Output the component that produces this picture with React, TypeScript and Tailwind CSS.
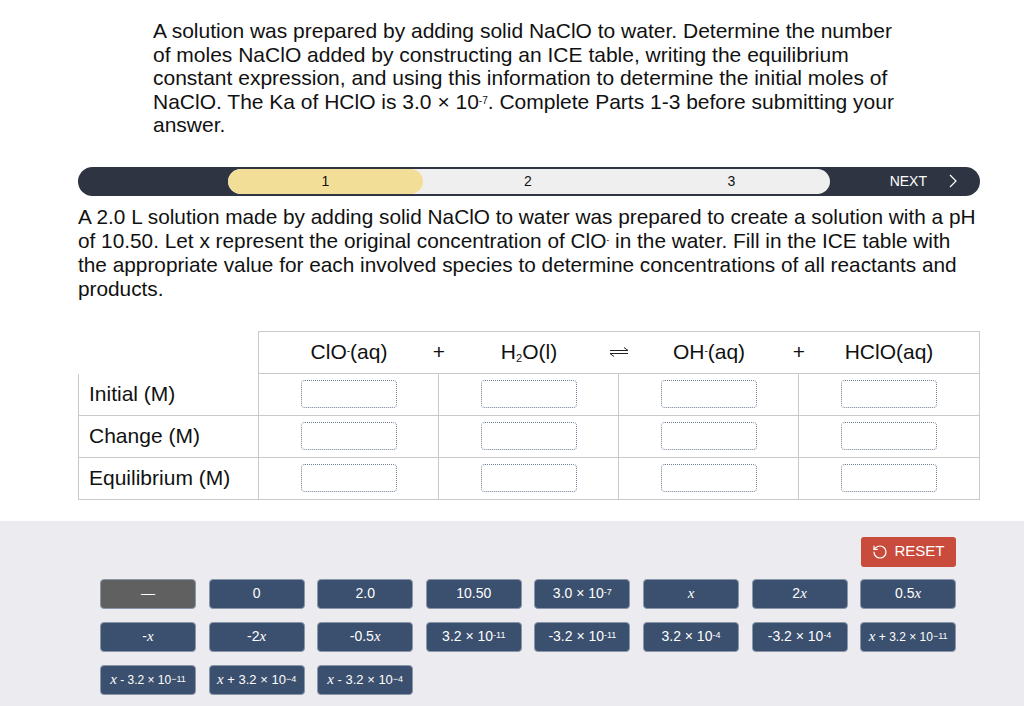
import { RotateCcw } from "lucide-react"

const X = () => <span className="font-['Liberation_Serif',serif] text-[15px] italic">x</span>

function Sup({ children }: { children: React.ReactNode }) {
  return <sup className="relative -top-[2px] text-[9px]">{children}</sup>
}

const choices: { label: React.ReactNode; muted?: boolean }[] = [
  { label: "—", muted: true },
  { label: "0" },
  { label: "2.0" },
  { label: "10.50" },
  { label: <>3.0 × 10<Sup>-7</Sup></> },
  { label: <X /> },
  { label: <>2<X /></> },
  { label: <>0.5<X /></> },
  { label: <>-<X /></> },
  { label: <>-2<X /></> },
  { label: <>-0.5<X /></> },
  { label: <>3.2 × 10<Sup>-11</Sup></> },
  { label: <>-3.2 × 10<Sup>-11</Sup></> },
  { label: <>3.2 × 10<Sup>-4</Sup></> },
  { label: <>-3.2 × 10<Sup>-4</Sup></> },
  { label: <span className="text-[12px]"><X /> + 3.2 × 10<Sup>−11</Sup></span> },
  { label: <span className="text-[12px]"><X /> - 3.2 × 10<Sup>−11</Sup></span> },
  { label: <span className="text-[13px]"><X /> + 3.2 × 10<Sup>−4</Sup></span> },
  { label: <span className="text-[13px]"><X /> - 3.2 × 10<Sup>−4</Sup></span> },
]

const rows = ["Initial (M)", "Change (M)", "Equilibrium (M)"]

function Equilibrium() {
  return (
    <svg width="20" height="12" viewBox="0 0 20 12" fill="none" stroke="#222" strokeWidth="1">
      <path d="M1 4.5h18M19 4.5l-4-3" />
      <path d="M19 7.5H1M1 7.5l4 3" />
    </svg>
  )
}

function AnswerBox() {
  return <div className="h-[28px] w-[96px] rounded-[4px] border border-dotted border-[#6f7f95] bg-white" />
}

export default function App() {
  return (
    <div className="flex min-h-screen flex-col bg-white font-['Liberation_Sans',Arial,sans-serif] text-[#111]">
      {/* Question intro */}
      <p className="ml-[153px] w-[745px] pt-[19px] text-[21px] leading-[23.5px]">
        A solution was prepared by adding solid NaClO to water. Determine the number of moles NaClO added by
        constructing an ICE table, writing the equilibrium constant expression, and using this information to determine
        the initial moles of NaClO. The Ka of HClO is 3.0 × 10<sup className="text-[10px]">-7</sup>. Complete Parts 1-3
        before submitting your answer.
      </p>

      {/* Step progress */}
      <div className="ml-[78px] mt-[30px] flex h-[29px] w-[902px] items-center rounded-full bg-[#2e3441] py-[2px]">
        <div className="ml-[150px] flex h-full w-[602px] overflow-hidden rounded-full bg-[#efefef] text-[14px]">
          <div className="flex w-[195px] items-center justify-center rounded-full bg-[#f3de98]">1</div>
          <div className="flex w-[210px] items-center justify-center">2</div>
          <div className="flex flex-1 items-center justify-center">3</div>
        </div>
        <div className="flex flex-1 items-center justify-end pr-[23px] text-[14px] text-white">
          <span>NEXT</span>
          <svg className="ml-[22px]" width="8" height="14" viewBox="0 0 8 14" fill="none" stroke="white" strokeWidth="1.2">
            <path d="M1 1l6 6-6 6" />
          </svg>
        </div>
      </div>

      {/* Part 1 prompt */}
      <p className="ml-[78px] mt-[9px] w-[902px] text-[20.8px] leading-[24px]">
        A 2.0 L solution made by adding solid NaClO to water was prepared to create a solution with a pH of 10.50. Let x
        represent the original concentration of ClO<sup className="text-[9px]">-</sup> in the water. Fill in the ICE
        table with the appropriate value for each involved species to determine concentrations of all reactants and
        products.
      </p>

      {/* ICE table */}
      <div className="ml-[78px] mt-[30px] w-[902px] text-[21px]">
        <div className="ml-[180px] flex h-[43px] items-center border border-[#c9c9c9] pl-[45px]">
          <span className="w-[90px] text-center">ClO<sup className="text-[10px]">-</sup>(aq)</span>
          <span className="w-[90px] text-center">+</span>
          <span className="w-[90px] text-center">H<sub className="text-[11px]">2</sub>O(l)</span>
          <span className="flex w-[90px] justify-center"><Equilibrium /></span>
          <span className="w-[90px] text-center">OH<sup className="text-[10px]">-</sup>(aq)</span>
          <span className="w-[90px] text-center">+</span>
          <span className="w-[90px] text-center">HClO(aq)</span>
        </div>
        {rows.map((r) => (
          <div key={r} className="grid h-[42px] grid-cols-[180px_repeat(4,1fr)] border-x border-b border-[#c9c9c9]">
            <div className="flex items-center border-r border-[#c9c9c9] pl-[10px]">{r}</div>
            {[0, 1, 2, 3].map((c) => (
              <div key={c} className="flex items-center justify-center border-r border-[#c9c9c9] last:border-r-0">
                <AnswerBox />
              </div>
            ))}
          </div>
        ))}
      </div>

      {/* Answer bank */}
      <div className="mt-[21px] flex-1 bg-[#ebebf0] pb-[10px] pl-[100px] pt-[16px]">
        <div className="w-[856px]">
          <div className="flex justify-end">
            <button className="flex h-[30px] w-[95px] items-center justify-center gap-[6px] rounded-[3px] bg-[#c94b3b] text-[15px] text-white">
              <RotateCcw size={16} strokeWidth={1.8} />
              RESET
            </button>
          </div>
          <div className="mt-[12px] grid grid-cols-[repeat(8,96px)] gap-x-[12.6px] gap-y-[13px]">
            {choices.map((b, i) => (
              <button
                key={i}
                className={`flex h-[30px] items-center justify-center rounded-[4px] border border-[#8a97aa] text-[14px] text-white ${
                  b.muted ? "bg-[#606060]" : "bg-[#3b4f6e]"
                }`}
              >
                {b.label}
              </button>
            ))}
          </div>
        </div>
      </div>
    </div>
  )
}
